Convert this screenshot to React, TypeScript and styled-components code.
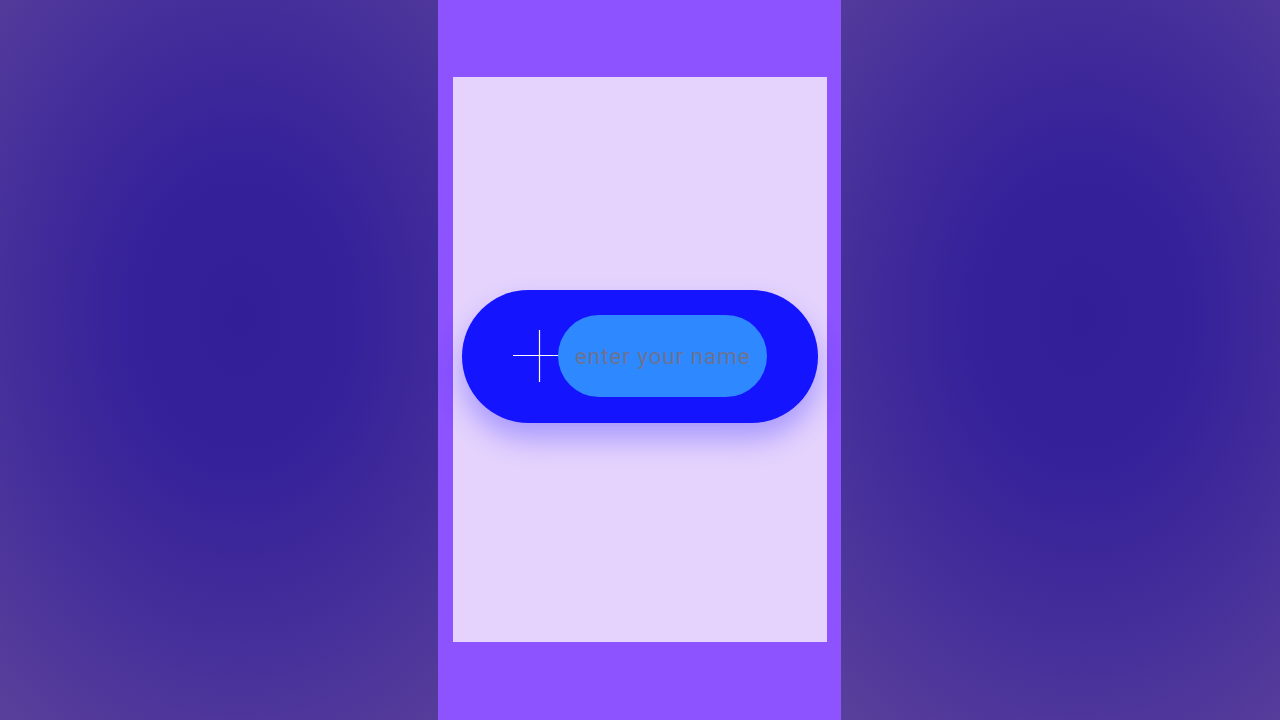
import styled, { createGlobalStyle } from 'styled-components'

const GlobalStyle = createGlobalStyle`
  html, body {
    margin: 0;
    padding: 0;
    width: 1280px;
    height: 720px;
    overflow: hidden;
    font-family: Roboto, "Liberation Sans", sans-serif;
  }
`

const Screen = styled.div`
  display: flex;
  width: 1280px;
  height: 720px;
`

// blurred backdrop either side of the video
const Backdrop = styled.div<{ $w: number }>`
  width: ${p => p.$w}px;
  height: 100%;
  background: radial-gradient(
    ellipse 85% 70% at 55% 44%,
    #321f98 0%,
    #35219a 30%,
    #432d9a 60%,
    #583f9b 100%
  );
`

const Column = styled.div`
  width: 403px;
  height: 100%;
  box-sizing: border-box;
  background: #8c53fe;
  padding: 77px 14px 78px 15px;
`

const Panel = styled.div`
  height: 100%;
  background: #e5d3fd;
  display: flex;
  align-items: center;
  justify-content: center;
  padding-bottom: 7px;
  box-sizing: border-box;
`

const Pill = styled.div`
  width: 356px;
  height: 133px;
  box-sizing: border-box;
  border-radius: 67px;
  background: #1414ff;
  box-shadow: 0 16px 28px rgba(40, 30, 255, 0.32);
  display: flex;
  align-items: center;
  padding-left: 51px;
`

const Plus = styled.svg`
  flex: none;
  display: block;
`

const Field = styled.div`
  width: 209px;
  height: 82px;
  margin-left: -7px;
  border-radius: 41px;
  background: #2e88ff;
  display: flex;
  align-items: center;
  padding-left: 17px;
  box-sizing: border-box;
  color: #6b7393;
  font-size: 22.5px;
  letter-spacing: 0.9px;
  white-space: nowrap;
`

export default function App() {
  return (
    <>
      <GlobalStyle />
      <Screen>
        <Backdrop $w={438} />
        <Column>
          <Panel>
            <Pill>
              <Plus width="52" height="52" viewBox="0 0 52 52">
                <line x1="0" y1="25.5" x2="52" y2="25.5" stroke="#ffffff" strokeWidth="1.2" />
                <line x1="26.5" y1="0" x2="26.5" y2="52" stroke="#ffffff" strokeWidth="1.2" />
              </Plus>
              <Field>enter your name</Field>
            </Pill>
          </Panel>
        </Column>
        <Backdrop $w={439} />
      </Screen>
    </>
  )
}
